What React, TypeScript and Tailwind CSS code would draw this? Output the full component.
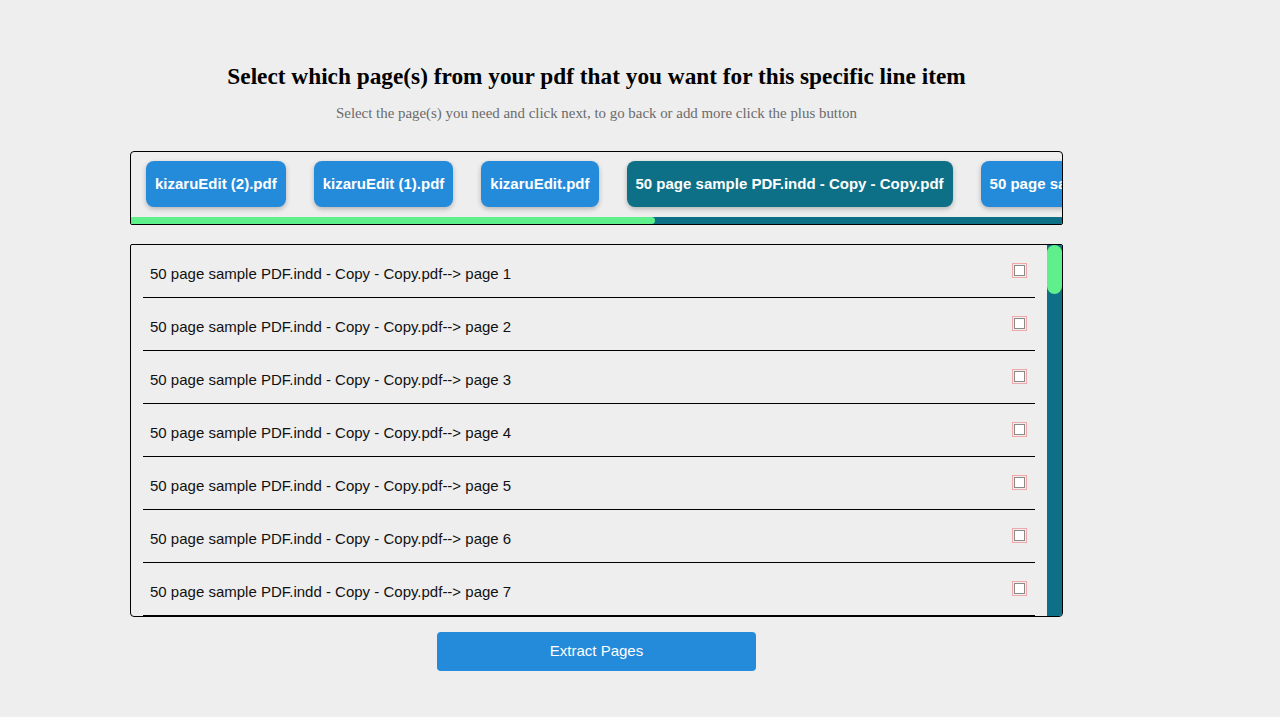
import React from "react";

const tabs = [
  { name: "kizaruEdit (2).pdf", active: false },
  { name: "kizaruEdit (1).pdf", active: false },
  { name: "kizaruEdit.pdf", active: false },
  { name: "50 page sample PDF.indd - Copy - Copy.pdf", active: true },
  { name: "50 page sample PDF.indd - Copy.pdf", active: false },
];

const rows = [1, 2, 3, 4, 5, 6, 7, 8];

export default function App() {
  return (
    <div className="min-h-[717px] w-full bg-[#eeeeee] overflow-hidden">
      <div className="ml-[130px] w-[933px] pt-[60px] flex flex-col items-center">
        <h2
          className="text-[23.3px] font-bold leading-[32px] text-black whitespace-nowrap"
          style={{ fontFamily: '"Liberation Serif", serif' }}
        >
          Select which page(s) from your pdf that you want for this specific line item
        </h2>
        <p
          className="mt-[11px] text-[14.9px] leading-[20px] text-[#6b6b6b] whitespace-nowrap"
          style={{ fontFamily: '"Liberation Serif", serif' }}
        >
          Select the page(s) you need and click next, to go back or add more click the plus button
        </p>

        <div className="mt-[28px] w-full border border-black rounded-t-[4px] rounded-b-[2px] overflow-hidden">
          <div className="flex gap-[28px] pl-[15px] pt-[9px] pb-[10px] overflow-hidden whitespace-nowrap">
            {tabs.map((t) => (
              <div
                key={t.name}
                className={`shrink-0 h-[46px] px-[9px] flex items-center rounded-[8px] text-white text-[15px] font-bold shadow-[0_2px_5px_rgba(0,0,0,0.25)] ${
                  t.active ? "bg-[#0e7086]" : "bg-[#248bdb]"
                }`}
                style={{ fontFamily: '"Liberation Sans", Arial, sans-serif' }}
              >
                {t.name}
              </div>
            ))}
          </div>
          <div className="h-[7px] bg-[#0e7086] flex">
            <div className="w-[524px] h-full bg-[#5ff08c] rounded-r-[4px]" />
          </div>
        </div>

        <div className="mt-[19px] w-full h-[373px] border border-black rounded-b-[4px] rounded-t-[2px] flex overflow-hidden">
          <div className="flex-1 overflow-hidden">
            {rows.map((n) => (
              <div
                key={n}
                className="mx-[12px] h-[53px] border-b border-black flex items-start justify-between pl-[7px] pr-[8px] pt-[19px]"
              >
                <span
                  className="text-[15px] leading-[20px] text-[#111111]"
                  style={{ fontFamily: '"Liberation Sans", Arial, sans-serif' }}
                >
                  50 page sample PDF.indd - Copy - Copy.pdf--&gt; page {n}
                </span>
                <div className="w-[15px] h-[15px] -mt-[1px] border border-[#f0a8a8] p-[1px]">
                  <div className="w-full h-full border border-[#8a8a8a] bg-white" />
                </div>
              </div>
            ))}
          </div>
          <div className="w-[15px] h-full bg-[#0e7086]">
            <div className="w-full h-[49px] bg-[#5ff08c] rounded-[8px]" />
          </div>
        </div>

        <button
          className="mt-[15px] w-[319px] h-[39px] bg-[#248bdb] rounded-[4px] text-white text-[15px]"
          style={{ fontFamily: '"Liberation Sans", Arial, sans-serif' }}
        >
          Extract Pages
        </button>
      </div>
    </div>
  );
}
